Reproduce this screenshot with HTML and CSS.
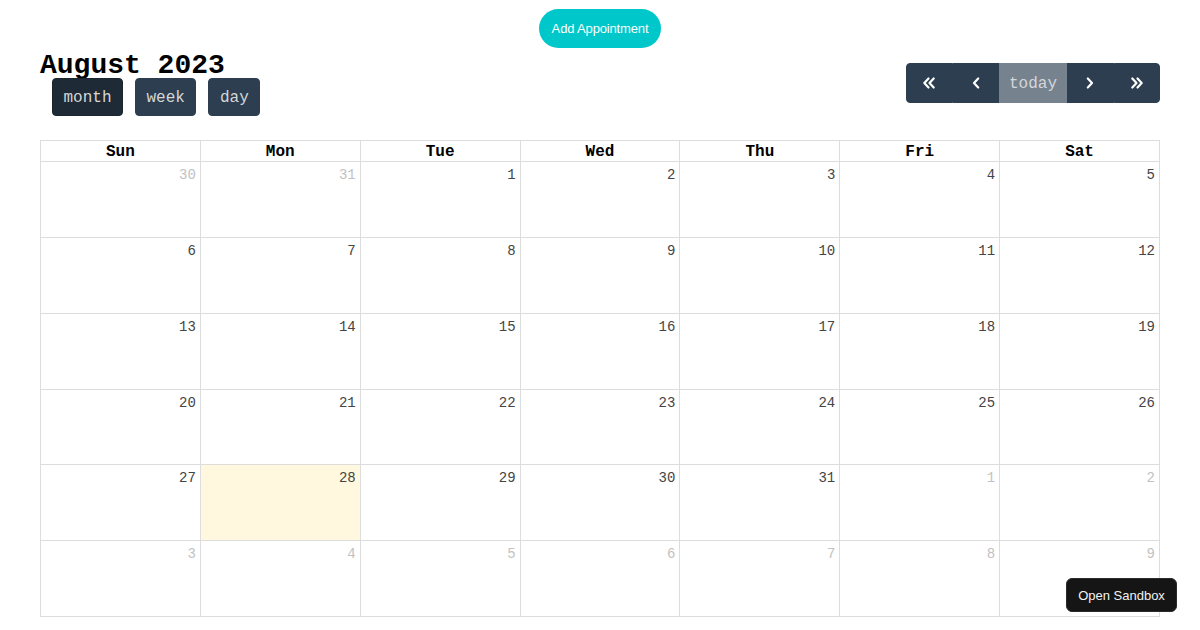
FILE: index.html
```html
<!DOCTYPE html>
<html>
<head>
<meta charset="utf-8">
<link rel="stylesheet" href="styles.css">
</head>
<body>
<div class="page">
  <div class="top">
    <button class="add-btn">Add Appointment</button>
  </div>
  <div class="toolbar">
    <div class="chunk-left">
      <h2 class="title">August 2023</h2>
      <div class="views">
        <button class="btn active">month</button>
        <button class="btn">week</button>
        <button class="btn">day</button>
      </div>
    </div>
    <div class="nav-group">
      <button class="btn nav-icon" aria-label="prev year"><svg width="18" height="18" viewBox="0 0 18 18"><path d="M8.5 4.5 L4.3 9 L8.5 13.5 M13.7 4.5 L9.5 9 L13.7 13.5" fill="none" stroke="#fff" stroke-width="2.2" stroke-linecap="round" stroke-linejoin="round"/></svg></button>
      <button class="btn nav-icon" aria-label="prev"><svg width="18" height="18" viewBox="0 0 18 18"><path d="M11.2 4.5 L7 9 L11.2 13.5" fill="none" stroke="#fff" stroke-width="2.2" stroke-linecap="round" stroke-linejoin="round"/></svg></button>
      <button class="btn today">today</button>
      <button class="btn nav-icon" aria-label="next"><svg width="18" height="18" viewBox="0 0 18 18"><path d="M6.8 4.5 L11 9 L6.8 13.5" fill="none" stroke="#fff" stroke-width="2.2" stroke-linecap="round" stroke-linejoin="round"/></svg></button>
      <button class="btn nav-icon" aria-label="next year"><svg width="18" height="18" viewBox="0 0 18 18"><path d="M4.3 4.5 L8.5 9 L4.3 13.5 M9.5 4.5 L13.7 9 L9.5 13.5" fill="none" stroke="#fff" stroke-width="2.2" stroke-linecap="round" stroke-linejoin="round"/></svg></button>
    </div>
  </div>
  <div class="grid">
    <div class="hd">Sun</div><div class="hd">Mon</div><div class="hd">Tue</div><div class="hd">Wed</div><div class="hd">Thu</div><div class="hd">Fri</div><div class="hd">Sat</div>
    <div class="day other">30</div><div class="day other">31</div><div class="day">1</div><div class="day">2</div><div class="day">3</div><div class="day">4</div><div class="day">5</div>
    <div class="day">6</div><div class="day">7</div><div class="day">8</div><div class="day">9</div><div class="day">10</div><div class="day">11</div><div class="day">12</div>
    <div class="day">13</div><div class="day">14</div><div class="day">15</div><div class="day">16</div><div class="day">17</div><div class="day">18</div><div class="day">19</div>
    <div class="day">20</div><div class="day">21</div><div class="day">22</div><div class="day">23</div><div class="day">24</div><div class="day">25</div><div class="day">26</div>
    <div class="day">27</div><div class="day today-cell">28</div><div class="day">29</div><div class="day">30</div><div class="day">31</div><div class="day other">1</div><div class="day other">2</div>
    <div class="day other">3</div><div class="day other">4</div><div class="day other">5</div><div class="day other">6</div><div class="day other">7</div><div class="day other">8</div><div class="day other">9</div>
  </div>
</div>
<button class="sandbox">Open Sandbox</button>
</body>
</html>
```
FILE: styles.css
```css
* { box-sizing: border-box; }
html, body { margin: 0; padding: 0; background: #fff; }
body { font-family: "Liberation Mono", "Courier New", monospace; color: #000; }
.page { padding: 9px 40px 0 40px; }
.top { display: flex; justify-content: center; }
.add-btn {
  height: 39px; width: 122px; border: none; border-radius: 20px;
  background: #00c7c9; color: #fff;
  font-family: "Liberation Sans", Arial, sans-serif; font-size: 13px; letter-spacing: -0.15px;
  padding: 0; cursor: pointer;
}
.toolbar {
  margin-top: 2px; margin-bottom: 24px;
  display: flex; justify-content: space-between; align-items: center;
}
.title { margin: 0; font-size: 28px; line-height: 24px; padding-top: 4px; font-weight: bold; }
.views { display: flex; gap: 12px; margin-left: 12px; }
.btn {
  font-family: "Liberation Mono", "Courier New", monospace; font-size: 16px; line-height: 24px;
  background: #2c3e50; color: #d6d6d6; border: 1px solid #2c3e50; border-radius: 4px;
  padding: 7px 10.5px 5px; height: 38px; cursor: pointer;
}
.btn.active { background: #1e2b37; border-color: #1a252f; }
.nav-group { display: flex; }
.nav-group .btn { height: 40px; border-radius: 0; display: flex; align-items: center; justify-content: center; }
.nav-group .btn:first-child { border-radius: 4px 0 0 4px; }
.nav-group .btn:last-child { border-radius: 0 4px 4px 0; }
.nav-icon { width: 46.5px; padding: 0; }
.btn.today { background: #76828d; border-color: #76828d; color: #d3d7db; width: 68px; padding: 2px 0 0; }
.grid {
  display: grid; grid-template-columns: repeat(7, 1fr); grid-template-rows: 20px repeat(6, 1fr);
  gap: 1px; padding: 1px; background: #dddddd; height: 477px;
}
.hd {
  background: #fff; text-align: center; font-weight: bold; font-size: 16px; line-height: 20px;
  padding: 1px 4px 0; color: #000;
}
.day {
  background: #fff; text-align: right; font-size: 14px; line-height: 18px; padding: 4px 4px; color: #444;
}
.day.other { color: #c2c2c2; }
.day.today-cell { background: #fff8df; }
.sandbox {
  position: fixed; right: 23px; bottom: 18px; width: 111px; height: 34px;
  background: #151515; color: #f2f2f2; border: 1px solid #2a2a2a; border-radius: 6px;
  font-family: "Liberation Sans", Arial, sans-serif; font-size: 13px; padding: 0; cursor: pointer;
}
```
